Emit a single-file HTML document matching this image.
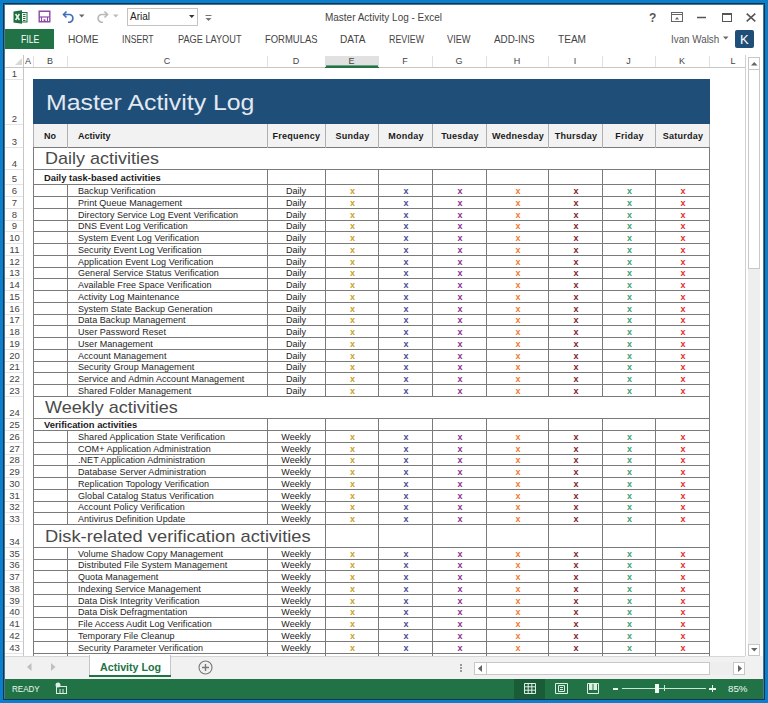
<!DOCTYPE html><html><head><meta charset='utf-8'><style>
*{margin:0;padding:0;box-sizing:border-box}
html,body{width:768px;height:703px;overflow:hidden;background:#fff}
body{position:relative;font-family:"Liberation Sans",sans-serif;color:#222}
div{position:absolute}
.t{white-space:nowrap;line-height:1}
.tab{font-size:10.5px;color:#444;top:34px}
.ch{font-size:9px;color:#444;top:57.3px;text-align:center}
.rh{font-size:9.5px;color:#444;left:5px;width:19px;text-align:center}
.act{font-size:9px;color:#222;left:78px}
.frq{font-size:9px;color:#222;left:267px;width:58px;text-align:center}
.hd{font-size:9px;font-weight:bold;color:#1a1a1a;text-align:center;top:132px;letter-spacing:0.25px}
.xm{font-size:9px;font-weight:bold;text-align:center}
.sec{font-size:16.5px;color:#333;left:45px;transform-origin:0 0;transform:scaleX(1.13)}
.sub{font-size:9.4px;font-weight:bold;color:#222;left:44px}
</style></head><body><div style="left:0;top:0;width:768px;height:703px;background:#fff"></div>
<svg style="position:absolute;left:13px;top:10px" width="15" height="14" viewBox="0 0 15 14"><rect x="8.5" y="2.5" width="5.5" height="9.5" fill="#f4faf6" stroke="#1e6e40" stroke-width="1"/><path d="M10 4.5h2.5M10 6.5h2.5M10 8.5h2.5M10 10.5h2.5" stroke="#1e6e40" stroke-width="1"/><path d="M0.5 1.5 L9 0.3 V13.7 L0.5 12.5Z" fill="#1e6e40"/><path d="M2.6 4 L6.4 10 M6.4 4 L2.6 10" stroke="#eaf5ee" stroke-width="1.5"/></svg>
<svg style="position:absolute;left:38px;top:10px" width="13" height="13" viewBox="0 0 13 13"><path d="M1.2 1.2H11.8V11.8H1.2Z" fill="#fff" stroke="#8e48a8" stroke-width="1.4"/><path d="M1.2 7H11.8" stroke="#8e48a8" stroke-width="1.2"/><path d="M3.5 7V11.8 M9.5 7V11.8" stroke="#8e48a8" stroke-width="1"/><rect x="5.6" y="9.3" width="1.8" height="2.5" fill="#8e48a8"/></svg>
<svg style="position:absolute;left:62px;top:10px" width="14" height="13" viewBox="0 0 14 13"><path d="M4.5 1.5 L1.5 4.5 L4.5 7.5" fill="none" stroke="#3f6fb6" stroke-width="1.6"/><path d="M1.8 4.5 H8 A4 4 0 0 1 8 12.2 H6" fill="none" stroke="#3f6fb6" stroke-width="1.6"/></svg>
<svg style="position:absolute;left:79px;top:14px" width="6" height="4"><path d="M0 0.5h5.5L2.75 3.5z" fill="#666"/></svg>
<svg style="position:absolute;left:95px;top:10px" width="14" height="13" viewBox="0 0 14 13"><path d="M9.5 1.5 L12.5 4.5 L9.5 7.5" fill="none" stroke="#b8b8b8" stroke-width="1.6"/><path d="M12.2 4.5 H6 A4 4 0 0 0 6 12.2 H8" fill="none" stroke="#b8b8b8" stroke-width="1.6"/></svg>
<svg style="position:absolute;left:113px;top:14px" width="6" height="4"><path d="M0 0.5h5.5L2.75 3.5z" fill="#bbb"/></svg>
<div style="left:127px;top:8px;width:71px;height:18px;border:1px solid #c3c3c3;background:#fff"></div>
<div class="t" style="left:130px;top:12px;font-size:10px;color:#222">Arial</div>
<svg style="position:absolute;left:189px;top:15px" width="6" height="4"><path d="M0 0h5.5L2.75 3z" fill="#333"/></svg>
<svg style="position:absolute;left:205px;top:14px" width="7" height="8"><path d="M0.5 1.5h6" stroke="#777" stroke-width="1"/><path d="M0.5 4h6L3.5 7z" fill="#777"/></svg>
<div class="t" style="left:649px;top:12px;font-size:12px;font-weight:bold;color:#555">?</div>
<svg style="position:absolute;left:671px;top:12px" width="12" height="10" viewBox="0 0 12 10"><rect x="0.5" y="0.5" width="11" height="9" fill="none" stroke="#666"/><path d="M0.5 2.5h11" stroke="#666"/><path d="M4 7.5 L6 5 L8 7.5Z" fill="#666"/></svg>
<svg style="position:absolute;left:697px;top:16px" width="9" height="3"><path d="M0 1.5H9" stroke="#555" stroke-width="1.5"/></svg>
<div style="left:722px;top:13px;width:10px;height:9px;border:1px solid #555;border-top-width:2px"></div>
<svg style="position:absolute;left:746px;top:13px" width="10" height="9" viewBox="0 0 10 9"><path d="M0.7 0.7 L9.3 8.3 M9.3 0.7 L0.7 8.3" stroke="#555" stroke-width="1.6"/></svg>
<div style="left:5px;top:29px;width:49px;height:20px;background:#217346;"></div>
<div class="t" style="left:324.5px;top:12px;font-size:11px;font-weight:400;transform-origin:0 0;transform:scaleX(0.9070);color:#444">Master Activity Log - Excel</div>
<div class="t" style="left:20.5px;top:33.8px;font-size:10.5px;font-weight:400;transform-origin:0 0;transform:scaleX(0.8248);color:#fff">FILE</div>
<div class="t" style="left:68.0px;top:33.8px;font-size:10.5px;font-weight:400;transform-origin:0 0;transform:scaleX(0.9683);color:#444">HOME</div>
<div class="t" style="left:122.0px;top:33.8px;font-size:10.5px;font-weight:400;transform-origin:0 0;transform:scaleX(0.8219);color:#444">INSERT</div>
<div class="t" style="left:177.5px;top:33.8px;font-size:10.5px;font-weight:400;transform-origin:0 0;transform:scaleX(0.8753);color:#444">PAGE LAYOUT</div>
<div class="t" style="left:264.5px;top:33.8px;font-size:10.5px;font-weight:400;transform-origin:0 0;transform:scaleX(0.8998);color:#444">FORMULAS</div>
<div class="t" style="left:340.0px;top:33.8px;font-size:10.5px;font-weight:400;transform-origin:0 0;transform:scaleX(0.9640);color:#444">DATA</div>
<div class="t" style="left:388.5px;top:33.8px;font-size:10.5px;font-weight:400;transform-origin:0 0;transform:scaleX(0.8450);color:#444">REVIEW</div>
<div class="t" style="left:447.0px;top:33.8px;font-size:10.5px;font-weight:400;transform-origin:0 0;transform:scaleX(0.8754);color:#444">VIEW</div>
<div class="t" style="left:494.0px;top:33.8px;font-size:10.5px;font-weight:400;transform-origin:0 0;transform:scaleX(0.9381);color:#444">ADD-INS</div>
<div class="t" style="left:557.5px;top:33.8px;font-size:10.5px;font-weight:400;transform-origin:0 0;transform:scaleX(0.9598);color:#444">TEAM</div>
<div class="t" style="left:670.5px;top:34px;font-size:10.5px;font-weight:400;transform-origin:0 0;transform:scaleX(0.9351);color:#555">Ivan Walsh</div>
<svg style="position:absolute;left:723px;top:36px" width="6" height="4"><path d="M0 0.5h5.5L2.75 3.5z" fill="#666"/></svg>
<div style="left:735px;top:30px;width:19px;height:18px;background:#1f4e79;border-radius:2px"></div>
<div class="t" style="left:740px;top:33px;font-size:13px;color:#fff">K</div>
<div style="left:5px;top:55px;width:740px;height:12px;background:#fff;"></div>
<div style="left:5px;top:67px;width:740px;height:1px;background:#c6c6c6"></div>
<div style="left:23px;top:55px;width:1px;height:601px;background:#c6c6c6"></div>
<div style="left:745px;top:55px;width:1px;height:601px;background:#d0d0d0"></div>
<svg style="position:absolute;left:15px;top:58px" width="7" height="7"><path d="M7 0V7H0Z" fill="#d8d8d8"/></svg>
<div class="t ch" style="left:23px;width:10px">A</div>
<div style="left:33px;top:56px;width:1px;height:11px;background:#e0e0e0"></div>
<div class="t ch" style="left:33px;width:34px">B</div>
<div style="left:67px;top:56px;width:1px;height:11px;background:#e0e0e0"></div>
<div class="t ch" style="left:67px;width:200px">C</div>
<div style="left:267px;top:56px;width:1px;height:11px;background:#e0e0e0"></div>
<div class="t ch" style="left:267px;width:58px">D</div>
<div style="left:325px;top:56px;width:54px;height:11px;background:#e1e1e1;"></div>
<div style="left:325px;top:65px;width:54px;height:1px;background:#6fa386;"></div>
<div style="left:325px;top:66px;width:54px;height:1.5px;background:#217346;"></div>
<div style="left:325px;top:56px;width:1px;height:11px;background:#e0e0e0"></div>
<div class="t ch" style="left:325px;width:53px">E</div>
<div style="left:378px;top:56px;width:1px;height:11px;background:#e0e0e0"></div>
<div class="t ch" style="left:378px;width:54px">F</div>
<div style="left:432px;top:56px;width:1px;height:11px;background:#e0e0e0"></div>
<div class="t ch" style="left:432px;width:54px">G</div>
<div style="left:486px;top:56px;width:1px;height:11px;background:#e0e0e0"></div>
<div class="t ch" style="left:486px;width:62px">H</div>
<div style="left:548px;top:56px;width:1px;height:11px;background:#e0e0e0"></div>
<div class="t ch" style="left:548px;width:54px">I</div>
<div style="left:602px;top:56px;width:1px;height:11px;background:#e0e0e0"></div>
<div class="t ch" style="left:602px;width:53px">J</div>
<div style="left:655px;top:56px;width:1px;height:11px;background:#e0e0e0"></div>
<div class="t ch" style="left:655px;width:54px">K</div>
<div style="left:709px;top:56px;width:1px;height:11px;background:#e0e0e0"></div>
<div class="t ch" style="left:709px;width:48px">L</div>
<div style="left:5px;top:79px;width:18px;height:1px;background:#e3e3e3"></div>
<div class="t rh" style="top:69px">1</div>
<div style="left:5px;top:124px;width:18px;height:1px;background:#e3e3e3"></div>
<div class="t rh" style="top:114px">2</div>
<div style="left:5px;top:147px;width:18px;height:1px;background:#e3e3e3"></div>
<div class="t rh" style="top:137px">3</div>
<div style="left:5px;top:169px;width:18px;height:1px;background:#e3e3e3"></div>
<div class="t rh" style="top:159px">4</div>
<div style="left:5px;top:184px;width:18px;height:1px;background:#e3e3e3"></div>
<div class="t rh" style="top:174px">5</div>
<div style="left:5px;top:196px;width:18px;height:1px;background:#e3e3e3"></div>
<div class="t rh" style="top:186px">6</div>
<div style="left:5px;top:208px;width:18px;height:1px;background:#e3e3e3"></div>
<div class="t rh" style="top:198px">7</div>
<div style="left:5px;top:220px;width:18px;height:1px;background:#e3e3e3"></div>
<div class="t rh" style="top:210px">8</div>
<div style="left:5px;top:231px;width:18px;height:1px;background:#e3e3e3"></div>
<div class="t rh" style="top:221px">9</div>
<div style="left:5px;top:243px;width:18px;height:1px;background:#e3e3e3"></div>
<div class="t rh" style="top:233px">10</div>
<div style="left:5px;top:255px;width:18px;height:1px;background:#e3e3e3"></div>
<div class="t rh" style="top:245px">11</div>
<div style="left:5px;top:267px;width:18px;height:1px;background:#e3e3e3"></div>
<div class="t rh" style="top:257px">12</div>
<div style="left:5px;top:278px;width:18px;height:1px;background:#e3e3e3"></div>
<div class="t rh" style="top:268px">13</div>
<div style="left:5px;top:290px;width:18px;height:1px;background:#e3e3e3"></div>
<div class="t rh" style="top:280px">14</div>
<div style="left:5px;top:302px;width:18px;height:1px;background:#e3e3e3"></div>
<div class="t rh" style="top:292px">15</div>
<div style="left:5px;top:314px;width:18px;height:1px;background:#e3e3e3"></div>
<div class="t rh" style="top:304px">16</div>
<div style="left:5px;top:325px;width:18px;height:1px;background:#e3e3e3"></div>
<div class="t rh" style="top:315px">17</div>
<div style="left:5px;top:337px;width:18px;height:1px;background:#e3e3e3"></div>
<div class="t rh" style="top:327px">18</div>
<div style="left:5px;top:349px;width:18px;height:1px;background:#e3e3e3"></div>
<div class="t rh" style="top:339px">19</div>
<div style="left:5px;top:361px;width:18px;height:1px;background:#e3e3e3"></div>
<div class="t rh" style="top:351px">20</div>
<div style="left:5px;top:372px;width:18px;height:1px;background:#e3e3e3"></div>
<div class="t rh" style="top:362px">21</div>
<div style="left:5px;top:384px;width:18px;height:1px;background:#e3e3e3"></div>
<div class="t rh" style="top:374px">22</div>
<div style="left:5px;top:396px;width:18px;height:1px;background:#e3e3e3"></div>
<div class="t rh" style="top:386px">23</div>
<div style="left:5px;top:418px;width:18px;height:1px;background:#e3e3e3"></div>
<div class="t rh" style="top:408px">24</div>
<div style="left:5px;top:430px;width:18px;height:1px;background:#e3e3e3"></div>
<div class="t rh" style="top:420px">25</div>
<div style="left:5px;top:442px;width:18px;height:1px;background:#e3e3e3"></div>
<div class="t rh" style="top:432px">26</div>
<div style="left:5px;top:454px;width:18px;height:1px;background:#e3e3e3"></div>
<div class="t rh" style="top:444px">27</div>
<div style="left:5px;top:465px;width:18px;height:1px;background:#e3e3e3"></div>
<div class="t rh" style="top:455px">28</div>
<div style="left:5px;top:477px;width:18px;height:1px;background:#e3e3e3"></div>
<div class="t rh" style="top:467px">29</div>
<div style="left:5px;top:489px;width:18px;height:1px;background:#e3e3e3"></div>
<div class="t rh" style="top:479px">30</div>
<div style="left:5px;top:501px;width:18px;height:1px;background:#e3e3e3"></div>
<div class="t rh" style="top:491px">31</div>
<div style="left:5px;top:512px;width:18px;height:1px;background:#e3e3e3"></div>
<div class="t rh" style="top:502px">32</div>
<div style="left:5px;top:524px;width:18px;height:1px;background:#e3e3e3"></div>
<div class="t rh" style="top:514px">33</div>
<div style="left:5px;top:547px;width:18px;height:1px;background:#e3e3e3"></div>
<div class="t rh" style="top:537px">34</div>
<div style="left:5px;top:559px;width:18px;height:1px;background:#e3e3e3"></div>
<div class="t rh" style="top:549px">35</div>
<div style="left:5px;top:570px;width:18px;height:1px;background:#e3e3e3"></div>
<div class="t rh" style="top:560px">36</div>
<div style="left:5px;top:582px;width:18px;height:1px;background:#e3e3e3"></div>
<div class="t rh" style="top:572px">37</div>
<div style="left:5px;top:594px;width:18px;height:1px;background:#e3e3e3"></div>
<div class="t rh" style="top:584px">38</div>
<div style="left:5px;top:606px;width:18px;height:1px;background:#e3e3e3"></div>
<div class="t rh" style="top:596px">39</div>
<div style="left:5px;top:617px;width:18px;height:1px;background:#e3e3e3"></div>
<div class="t rh" style="top:607px">40</div>
<div style="left:5px;top:629px;width:18px;height:1px;background:#e3e3e3"></div>
<div class="t rh" style="top:619px">41</div>
<div style="left:5px;top:641px;width:18px;height:1px;background:#e3e3e3"></div>
<div class="t rh" style="top:631px">42</div>
<div style="left:5px;top:653px;width:18px;height:1px;background:#e3e3e3"></div>
<div class="t rh" style="top:643px">43</div>

<div style="left:33px;top:79px;width:677px;height:45px;background:#1f4e79;"></div>
<div class="t" style="left:46px;top:93px;font-size:21.5px;color:#e2e9f0;transform-origin:0 0;transform:scaleX(1.155)">Master Activity Log</div>
<div style="left:33px;top:124px;width:677px;height:23px;background:#f2f2f2;"></div>
<div class="t" style="left:44px;top:132px;font-size:9px;font-weight:bold;color:#1a1a1a">No</div>
<div class="t" style="left:78px;top:132px;font-size:9px;font-weight:bold;color:#1a1a1a">Activity</div>
<div class="t hd" style="left:267.5px;width:58px">Frequency</div>
<div class="t hd" style="left:326px;width:53px">Sunday</div>
<div class="t hd" style="left:379px;width:54px">Monday</div>
<div class="t hd" style="left:433px;width:54px">Tuesday</div>
<div class="t hd" style="left:487px;width:62px">Wednesday</div>
<div class="t hd" style="left:549px;width:54px">Thursday</div>
<div class="t hd" style="left:603px;width:53px">Friday</div>
<div class="t hd" style="left:656px;width:54px">Saturday</div>
<div style="left:33px;top:147px;width:677px;height:1px;background:#7a7a7a"></div>
<div style="left:33px;top:124px;width:1px;height:24px;background:#b0b0b0"></div>
<div style="left:67px;top:124px;width:1px;height:24px;background:#b0b0b0"></div>
<div style="left:267px;top:124px;width:1px;height:24px;background:#b0b0b0"></div>
<div style="left:325px;top:124px;width:1px;height:24px;background:#b0b0b0"></div>
<div style="left:378px;top:124px;width:1px;height:24px;background:#b0b0b0"></div>
<div style="left:432px;top:124px;width:1px;height:24px;background:#b0b0b0"></div>
<div style="left:486px;top:124px;width:1px;height:24px;background:#b0b0b0"></div>
<div style="left:548px;top:124px;width:1px;height:24px;background:#b0b0b0"></div>
<div style="left:602px;top:124px;width:1px;height:24px;background:#b0b0b0"></div>
<div style="left:655px;top:124px;width:1px;height:24px;background:#b0b0b0"></div>
<div style="left:709px;top:124px;width:1px;height:24px;background:#b0b0b0"></div>
<div class="t" style="left:44.5px;top:150.0px;font-size:17px;color:#4a4a4a;transform-origin:0 0;transform:scaleX(1.0585)">Daily activities</div>
<div style="left:33px;top:169px;width:677px;height:1px;background:#7a7a7a"></div>
<div style="left:33px;top:147px;width:1px;height:23px;background:#7a7a7a"></div>
<div style="left:709px;top:147px;width:1px;height:23px;background:#7a7a7a"></div>
<div class="t" style="left:44px;top:172.9px;font-size:9.4px;font-weight:bold;color:#1a1a1a">Daily task-based activities</div>
<div style="left:33px;top:184px;width:677px;height:1px;background:#7a7a7a"></div>
<div style="left:33px;top:169px;width:1px;height:16px;background:#7a7a7a"></div>
<div style="left:267px;top:169px;width:1px;height:16px;background:#7a7a7a"></div>
<div style="left:325px;top:169px;width:1px;height:16px;background:#7a7a7a"></div>
<div style="left:378px;top:169px;width:1px;height:16px;background:#7a7a7a"></div>
<div style="left:432px;top:169px;width:1px;height:16px;background:#7a7a7a"></div>
<div style="left:486px;top:169px;width:1px;height:16px;background:#7a7a7a"></div>
<div style="left:548px;top:169px;width:1px;height:16px;background:#7a7a7a"></div>
<div style="left:602px;top:169px;width:1px;height:16px;background:#7a7a7a"></div>
<div style="left:655px;top:169px;width:1px;height:16px;background:#7a7a7a"></div>
<div style="left:709px;top:169px;width:1px;height:16px;background:#7a7a7a"></div>
<div style="left:33px;top:196px;width:677px;height:1px;background:#7a7a7a"></div>
<div style="left:33px;top:184px;width:1px;height:13px;background:#7a7a7a"></div>
<div style="left:67px;top:184px;width:1px;height:13px;background:#7a7a7a"></div>
<div style="left:267px;top:184px;width:1px;height:13px;background:#7a7a7a"></div>
<div style="left:325px;top:184px;width:1px;height:13px;background:#7a7a7a"></div>
<div style="left:378px;top:184px;width:1px;height:13px;background:#7a7a7a"></div>
<div style="left:432px;top:184px;width:1px;height:13px;background:#7a7a7a"></div>
<div style="left:486px;top:184px;width:1px;height:13px;background:#7a7a7a"></div>
<div style="left:548px;top:184px;width:1px;height:13px;background:#7a7a7a"></div>
<div style="left:602px;top:184px;width:1px;height:13px;background:#7a7a7a"></div>
<div style="left:655px;top:184px;width:1px;height:13px;background:#7a7a7a"></div>
<div style="left:709px;top:184px;width:1px;height:13px;background:#7a7a7a"></div>
<div class="t" style="left:78px;top:186.5px;font-size:9px;color:#1e1e1e;letter-spacing:0.05px">Backup Verification</div>
<div class="t frq" style="top:186.5px">Daily</div>
<div class="t xm" style="left:326px;width:53px;top:186.5px;color:#c99f2c">x</div>
<div class="t xm" style="left:379px;width:54px;top:186.5px;color:#4a4c94">x</div>
<div class="t xm" style="left:433px;width:54px;top:186.5px;color:#8e2f93">x</div>
<div class="t xm" style="left:487px;width:62px;top:186.5px;color:#f07a30">x</div>
<div class="t xm" style="left:549px;width:54px;top:186.5px;color:#82202e">x</div>
<div class="t xm" style="left:603px;width:53px;top:186.5px;color:#42a070">x</div>
<div class="t xm" style="left:656px;width:54px;top:186.5px;color:#e22b2e">x</div>
<div style="left:33px;top:208px;width:677px;height:1px;background:#7a7a7a"></div>
<div style="left:33px;top:196px;width:1px;height:13px;background:#7a7a7a"></div>
<div style="left:67px;top:196px;width:1px;height:13px;background:#7a7a7a"></div>
<div style="left:267px;top:196px;width:1px;height:13px;background:#7a7a7a"></div>
<div style="left:325px;top:196px;width:1px;height:13px;background:#7a7a7a"></div>
<div style="left:378px;top:196px;width:1px;height:13px;background:#7a7a7a"></div>
<div style="left:432px;top:196px;width:1px;height:13px;background:#7a7a7a"></div>
<div style="left:486px;top:196px;width:1px;height:13px;background:#7a7a7a"></div>
<div style="left:548px;top:196px;width:1px;height:13px;background:#7a7a7a"></div>
<div style="left:602px;top:196px;width:1px;height:13px;background:#7a7a7a"></div>
<div style="left:655px;top:196px;width:1px;height:13px;background:#7a7a7a"></div>
<div style="left:709px;top:196px;width:1px;height:13px;background:#7a7a7a"></div>
<div class="t" style="left:78px;top:198.5px;font-size:9px;color:#1e1e1e;letter-spacing:0.05px">Print Queue Management</div>
<div class="t frq" style="top:198.5px">Daily</div>
<div class="t xm" style="left:326px;width:53px;top:198.5px;color:#c99f2c">x</div>
<div class="t xm" style="left:379px;width:54px;top:198.5px;color:#4a4c94">x</div>
<div class="t xm" style="left:433px;width:54px;top:198.5px;color:#8e2f93">x</div>
<div class="t xm" style="left:487px;width:62px;top:198.5px;color:#f07a30">x</div>
<div class="t xm" style="left:549px;width:54px;top:198.5px;color:#82202e">x</div>
<div class="t xm" style="left:603px;width:53px;top:198.5px;color:#42a070">x</div>
<div class="t xm" style="left:656px;width:54px;top:198.5px;color:#e22b2e">x</div>
<div style="left:33px;top:220px;width:677px;height:1px;background:#7a7a7a"></div>
<div style="left:33px;top:208px;width:1px;height:13px;background:#7a7a7a"></div>
<div style="left:67px;top:208px;width:1px;height:13px;background:#7a7a7a"></div>
<div style="left:267px;top:208px;width:1px;height:13px;background:#7a7a7a"></div>
<div style="left:325px;top:208px;width:1px;height:13px;background:#7a7a7a"></div>
<div style="left:378px;top:208px;width:1px;height:13px;background:#7a7a7a"></div>
<div style="left:432px;top:208px;width:1px;height:13px;background:#7a7a7a"></div>
<div style="left:486px;top:208px;width:1px;height:13px;background:#7a7a7a"></div>
<div style="left:548px;top:208px;width:1px;height:13px;background:#7a7a7a"></div>
<div style="left:602px;top:208px;width:1px;height:13px;background:#7a7a7a"></div>
<div style="left:655px;top:208px;width:1px;height:13px;background:#7a7a7a"></div>
<div style="left:709px;top:208px;width:1px;height:13px;background:#7a7a7a"></div>
<div class="t" style="left:78px;top:210.5px;font-size:9px;color:#1e1e1e;letter-spacing:0.05px">Directory Service Log Event Verification</div>
<div class="t frq" style="top:210.5px">Daily</div>
<div class="t xm" style="left:326px;width:53px;top:210.5px;color:#c99f2c">x</div>
<div class="t xm" style="left:379px;width:54px;top:210.5px;color:#4a4c94">x</div>
<div class="t xm" style="left:433px;width:54px;top:210.5px;color:#8e2f93">x</div>
<div class="t xm" style="left:487px;width:62px;top:210.5px;color:#f07a30">x</div>
<div class="t xm" style="left:549px;width:54px;top:210.5px;color:#82202e">x</div>
<div class="t xm" style="left:603px;width:53px;top:210.5px;color:#42a070">x</div>
<div class="t xm" style="left:656px;width:54px;top:210.5px;color:#e22b2e">x</div>
<div style="left:33px;top:231px;width:677px;height:1px;background:#7a7a7a"></div>
<div style="left:33px;top:220px;width:1px;height:12px;background:#7a7a7a"></div>
<div style="left:67px;top:220px;width:1px;height:12px;background:#7a7a7a"></div>
<div style="left:267px;top:220px;width:1px;height:12px;background:#7a7a7a"></div>
<div style="left:325px;top:220px;width:1px;height:12px;background:#7a7a7a"></div>
<div style="left:378px;top:220px;width:1px;height:12px;background:#7a7a7a"></div>
<div style="left:432px;top:220px;width:1px;height:12px;background:#7a7a7a"></div>
<div style="left:486px;top:220px;width:1px;height:12px;background:#7a7a7a"></div>
<div style="left:548px;top:220px;width:1px;height:12px;background:#7a7a7a"></div>
<div style="left:602px;top:220px;width:1px;height:12px;background:#7a7a7a"></div>
<div style="left:655px;top:220px;width:1px;height:12px;background:#7a7a7a"></div>
<div style="left:709px;top:220px;width:1px;height:12px;background:#7a7a7a"></div>
<div class="t" style="left:78px;top:221.5px;font-size:9px;color:#1e1e1e;letter-spacing:0.05px">DNS Event Log Verification</div>
<div class="t frq" style="top:221.5px">Daily</div>
<div class="t xm" style="left:326px;width:53px;top:221.5px;color:#c99f2c">x</div>
<div class="t xm" style="left:379px;width:54px;top:221.5px;color:#4a4c94">x</div>
<div class="t xm" style="left:433px;width:54px;top:221.5px;color:#8e2f93">x</div>
<div class="t xm" style="left:487px;width:62px;top:221.5px;color:#f07a30">x</div>
<div class="t xm" style="left:549px;width:54px;top:221.5px;color:#82202e">x</div>
<div class="t xm" style="left:603px;width:53px;top:221.5px;color:#42a070">x</div>
<div class="t xm" style="left:656px;width:54px;top:221.5px;color:#e22b2e">x</div>
<div style="left:33px;top:243px;width:677px;height:1px;background:#7a7a7a"></div>
<div style="left:33px;top:231px;width:1px;height:13px;background:#7a7a7a"></div>
<div style="left:67px;top:231px;width:1px;height:13px;background:#7a7a7a"></div>
<div style="left:267px;top:231px;width:1px;height:13px;background:#7a7a7a"></div>
<div style="left:325px;top:231px;width:1px;height:13px;background:#7a7a7a"></div>
<div style="left:378px;top:231px;width:1px;height:13px;background:#7a7a7a"></div>
<div style="left:432px;top:231px;width:1px;height:13px;background:#7a7a7a"></div>
<div style="left:486px;top:231px;width:1px;height:13px;background:#7a7a7a"></div>
<div style="left:548px;top:231px;width:1px;height:13px;background:#7a7a7a"></div>
<div style="left:602px;top:231px;width:1px;height:13px;background:#7a7a7a"></div>
<div style="left:655px;top:231px;width:1px;height:13px;background:#7a7a7a"></div>
<div style="left:709px;top:231px;width:1px;height:13px;background:#7a7a7a"></div>
<div class="t" style="left:78px;top:233.5px;font-size:9px;color:#1e1e1e;letter-spacing:0.05px">System Event Log Verification</div>
<div class="t frq" style="top:233.5px">Daily</div>
<div class="t xm" style="left:326px;width:53px;top:233.5px;color:#c99f2c">x</div>
<div class="t xm" style="left:379px;width:54px;top:233.5px;color:#4a4c94">x</div>
<div class="t xm" style="left:433px;width:54px;top:233.5px;color:#8e2f93">x</div>
<div class="t xm" style="left:487px;width:62px;top:233.5px;color:#f07a30">x</div>
<div class="t xm" style="left:549px;width:54px;top:233.5px;color:#82202e">x</div>
<div class="t xm" style="left:603px;width:53px;top:233.5px;color:#42a070">x</div>
<div class="t xm" style="left:656px;width:54px;top:233.5px;color:#e22b2e">x</div>
<div style="left:33px;top:255px;width:677px;height:1px;background:#7a7a7a"></div>
<div style="left:33px;top:243px;width:1px;height:13px;background:#7a7a7a"></div>
<div style="left:67px;top:243px;width:1px;height:13px;background:#7a7a7a"></div>
<div style="left:267px;top:243px;width:1px;height:13px;background:#7a7a7a"></div>
<div style="left:325px;top:243px;width:1px;height:13px;background:#7a7a7a"></div>
<div style="left:378px;top:243px;width:1px;height:13px;background:#7a7a7a"></div>
<div style="left:432px;top:243px;width:1px;height:13px;background:#7a7a7a"></div>
<div style="left:486px;top:243px;width:1px;height:13px;background:#7a7a7a"></div>
<div style="left:548px;top:243px;width:1px;height:13px;background:#7a7a7a"></div>
<div style="left:602px;top:243px;width:1px;height:13px;background:#7a7a7a"></div>
<div style="left:655px;top:243px;width:1px;height:13px;background:#7a7a7a"></div>
<div style="left:709px;top:243px;width:1px;height:13px;background:#7a7a7a"></div>
<div class="t" style="left:78px;top:245.5px;font-size:9px;color:#1e1e1e;letter-spacing:0.05px">Security Event Log Verification</div>
<div class="t frq" style="top:245.5px">Daily</div>
<div class="t xm" style="left:326px;width:53px;top:245.5px;color:#c99f2c">x</div>
<div class="t xm" style="left:379px;width:54px;top:245.5px;color:#4a4c94">x</div>
<div class="t xm" style="left:433px;width:54px;top:245.5px;color:#8e2f93">x</div>
<div class="t xm" style="left:487px;width:62px;top:245.5px;color:#f07a30">x</div>
<div class="t xm" style="left:549px;width:54px;top:245.5px;color:#82202e">x</div>
<div class="t xm" style="left:603px;width:53px;top:245.5px;color:#42a070">x</div>
<div class="t xm" style="left:656px;width:54px;top:245.5px;color:#e22b2e">x</div>
<div style="left:33px;top:267px;width:677px;height:1px;background:#7a7a7a"></div>
<div style="left:33px;top:255px;width:1px;height:13px;background:#7a7a7a"></div>
<div style="left:67px;top:255px;width:1px;height:13px;background:#7a7a7a"></div>
<div style="left:267px;top:255px;width:1px;height:13px;background:#7a7a7a"></div>
<div style="left:325px;top:255px;width:1px;height:13px;background:#7a7a7a"></div>
<div style="left:378px;top:255px;width:1px;height:13px;background:#7a7a7a"></div>
<div style="left:432px;top:255px;width:1px;height:13px;background:#7a7a7a"></div>
<div style="left:486px;top:255px;width:1px;height:13px;background:#7a7a7a"></div>
<div style="left:548px;top:255px;width:1px;height:13px;background:#7a7a7a"></div>
<div style="left:602px;top:255px;width:1px;height:13px;background:#7a7a7a"></div>
<div style="left:655px;top:255px;width:1px;height:13px;background:#7a7a7a"></div>
<div style="left:709px;top:255px;width:1px;height:13px;background:#7a7a7a"></div>
<div class="t" style="left:78px;top:257.5px;font-size:9px;color:#1e1e1e;letter-spacing:0.05px">Application Event Log Verification</div>
<div class="t frq" style="top:257.5px">Daily</div>
<div class="t xm" style="left:326px;width:53px;top:257.5px;color:#c99f2c">x</div>
<div class="t xm" style="left:379px;width:54px;top:257.5px;color:#4a4c94">x</div>
<div class="t xm" style="left:433px;width:54px;top:257.5px;color:#8e2f93">x</div>
<div class="t xm" style="left:487px;width:62px;top:257.5px;color:#f07a30">x</div>
<div class="t xm" style="left:549px;width:54px;top:257.5px;color:#82202e">x</div>
<div class="t xm" style="left:603px;width:53px;top:257.5px;color:#42a070">x</div>
<div class="t xm" style="left:656px;width:54px;top:257.5px;color:#e22b2e">x</div>
<div style="left:33px;top:278px;width:677px;height:1px;background:#7a7a7a"></div>
<div style="left:33px;top:267px;width:1px;height:12px;background:#7a7a7a"></div>
<div style="left:67px;top:267px;width:1px;height:12px;background:#7a7a7a"></div>
<div style="left:267px;top:267px;width:1px;height:12px;background:#7a7a7a"></div>
<div style="left:325px;top:267px;width:1px;height:12px;background:#7a7a7a"></div>
<div style="left:378px;top:267px;width:1px;height:12px;background:#7a7a7a"></div>
<div style="left:432px;top:267px;width:1px;height:12px;background:#7a7a7a"></div>
<div style="left:486px;top:267px;width:1px;height:12px;background:#7a7a7a"></div>
<div style="left:548px;top:267px;width:1px;height:12px;background:#7a7a7a"></div>
<div style="left:602px;top:267px;width:1px;height:12px;background:#7a7a7a"></div>
<div style="left:655px;top:267px;width:1px;height:12px;background:#7a7a7a"></div>
<div style="left:709px;top:267px;width:1px;height:12px;background:#7a7a7a"></div>
<div class="t" style="left:78px;top:268.5px;font-size:9px;color:#1e1e1e;letter-spacing:0.05px">General Service Status Verification</div>
<div class="t frq" style="top:268.5px">Daily</div>
<div class="t xm" style="left:326px;width:53px;top:268.5px;color:#c99f2c">x</div>
<div class="t xm" style="left:379px;width:54px;top:268.5px;color:#4a4c94">x</div>
<div class="t xm" style="left:433px;width:54px;top:268.5px;color:#8e2f93">x</div>
<div class="t xm" style="left:487px;width:62px;top:268.5px;color:#f07a30">x</div>
<div class="t xm" style="left:549px;width:54px;top:268.5px;color:#82202e">x</div>
<div class="t xm" style="left:603px;width:53px;top:268.5px;color:#42a070">x</div>
<div class="t xm" style="left:656px;width:54px;top:268.5px;color:#e22b2e">x</div>
<div style="left:33px;top:290px;width:677px;height:1px;background:#7a7a7a"></div>
<div style="left:33px;top:278px;width:1px;height:13px;background:#7a7a7a"></div>
<div style="left:67px;top:278px;width:1px;height:13px;background:#7a7a7a"></div>
<div style="left:267px;top:278px;width:1px;height:13px;background:#7a7a7a"></div>
<div style="left:325px;top:278px;width:1px;height:13px;background:#7a7a7a"></div>
<div style="left:378px;top:278px;width:1px;height:13px;background:#7a7a7a"></div>
<div style="left:432px;top:278px;width:1px;height:13px;background:#7a7a7a"></div>
<div style="left:486px;top:278px;width:1px;height:13px;background:#7a7a7a"></div>
<div style="left:548px;top:278px;width:1px;height:13px;background:#7a7a7a"></div>
<div style="left:602px;top:278px;width:1px;height:13px;background:#7a7a7a"></div>
<div style="left:655px;top:278px;width:1px;height:13px;background:#7a7a7a"></div>
<div style="left:709px;top:278px;width:1px;height:13px;background:#7a7a7a"></div>
<div class="t" style="left:78px;top:280.5px;font-size:9px;color:#1e1e1e;letter-spacing:0.05px">Available Free Space Verification</div>
<div class="t frq" style="top:280.5px">Daily</div>
<div class="t xm" style="left:326px;width:53px;top:280.5px;color:#c99f2c">x</div>
<div class="t xm" style="left:379px;width:54px;top:280.5px;color:#4a4c94">x</div>
<div class="t xm" style="left:433px;width:54px;top:280.5px;color:#8e2f93">x</div>
<div class="t xm" style="left:487px;width:62px;top:280.5px;color:#f07a30">x</div>
<div class="t xm" style="left:549px;width:54px;top:280.5px;color:#82202e">x</div>
<div class="t xm" style="left:603px;width:53px;top:280.5px;color:#42a070">x</div>
<div class="t xm" style="left:656px;width:54px;top:280.5px;color:#e22b2e">x</div>
<div style="left:33px;top:302px;width:677px;height:1px;background:#7a7a7a"></div>
<div style="left:33px;top:290px;width:1px;height:13px;background:#7a7a7a"></div>
<div style="left:67px;top:290px;width:1px;height:13px;background:#7a7a7a"></div>
<div style="left:267px;top:290px;width:1px;height:13px;background:#7a7a7a"></div>
<div style="left:325px;top:290px;width:1px;height:13px;background:#7a7a7a"></div>
<div style="left:378px;top:290px;width:1px;height:13px;background:#7a7a7a"></div>
<div style="left:432px;top:290px;width:1px;height:13px;background:#7a7a7a"></div>
<div style="left:486px;top:290px;width:1px;height:13px;background:#7a7a7a"></div>
<div style="left:548px;top:290px;width:1px;height:13px;background:#7a7a7a"></div>
<div style="left:602px;top:290px;width:1px;height:13px;background:#7a7a7a"></div>
<div style="left:655px;top:290px;width:1px;height:13px;background:#7a7a7a"></div>
<div style="left:709px;top:290px;width:1px;height:13px;background:#7a7a7a"></div>
<div class="t" style="left:78px;top:292.5px;font-size:9px;color:#1e1e1e;letter-spacing:0.05px">Activity Log Maintenance</div>
<div class="t frq" style="top:292.5px">Daily</div>
<div class="t xm" style="left:326px;width:53px;top:292.5px;color:#c99f2c">x</div>
<div class="t xm" style="left:379px;width:54px;top:292.5px;color:#4a4c94">x</div>
<div class="t xm" style="left:433px;width:54px;top:292.5px;color:#8e2f93">x</div>
<div class="t xm" style="left:487px;width:62px;top:292.5px;color:#f07a30">x</div>
<div class="t xm" style="left:549px;width:54px;top:292.5px;color:#82202e">x</div>
<div class="t xm" style="left:603px;width:53px;top:292.5px;color:#42a070">x</div>
<div class="t xm" style="left:656px;width:54px;top:292.5px;color:#e22b2e">x</div>
<div style="left:33px;top:314px;width:677px;height:1px;background:#7a7a7a"></div>
<div style="left:33px;top:302px;width:1px;height:13px;background:#7a7a7a"></div>
<div style="left:67px;top:302px;width:1px;height:13px;background:#7a7a7a"></div>
<div style="left:267px;top:302px;width:1px;height:13px;background:#7a7a7a"></div>
<div style="left:325px;top:302px;width:1px;height:13px;background:#7a7a7a"></div>
<div style="left:378px;top:302px;width:1px;height:13px;background:#7a7a7a"></div>
<div style="left:432px;top:302px;width:1px;height:13px;background:#7a7a7a"></div>
<div style="left:486px;top:302px;width:1px;height:13px;background:#7a7a7a"></div>
<div style="left:548px;top:302px;width:1px;height:13px;background:#7a7a7a"></div>
<div style="left:602px;top:302px;width:1px;height:13px;background:#7a7a7a"></div>
<div style="left:655px;top:302px;width:1px;height:13px;background:#7a7a7a"></div>
<div style="left:709px;top:302px;width:1px;height:13px;background:#7a7a7a"></div>
<div class="t" style="left:78px;top:304.5px;font-size:9px;color:#1e1e1e;letter-spacing:0.05px">System State Backup Generation</div>
<div class="t frq" style="top:304.5px">Daily</div>
<div class="t xm" style="left:326px;width:53px;top:304.5px;color:#c99f2c">x</div>
<div class="t xm" style="left:379px;width:54px;top:304.5px;color:#4a4c94">x</div>
<div class="t xm" style="left:433px;width:54px;top:304.5px;color:#8e2f93">x</div>
<div class="t xm" style="left:487px;width:62px;top:304.5px;color:#f07a30">x</div>
<div class="t xm" style="left:549px;width:54px;top:304.5px;color:#82202e">x</div>
<div class="t xm" style="left:603px;width:53px;top:304.5px;color:#42a070">x</div>
<div class="t xm" style="left:656px;width:54px;top:304.5px;color:#e22b2e">x</div>
<div style="left:33px;top:325px;width:677px;height:1px;background:#7a7a7a"></div>
<div style="left:33px;top:314px;width:1px;height:12px;background:#7a7a7a"></div>
<div style="left:67px;top:314px;width:1px;height:12px;background:#7a7a7a"></div>
<div style="left:267px;top:314px;width:1px;height:12px;background:#7a7a7a"></div>
<div style="left:325px;top:314px;width:1px;height:12px;background:#7a7a7a"></div>
<div style="left:378px;top:314px;width:1px;height:12px;background:#7a7a7a"></div>
<div style="left:432px;top:314px;width:1px;height:12px;background:#7a7a7a"></div>
<div style="left:486px;top:314px;width:1px;height:12px;background:#7a7a7a"></div>
<div style="left:548px;top:314px;width:1px;height:12px;background:#7a7a7a"></div>
<div style="left:602px;top:314px;width:1px;height:12px;background:#7a7a7a"></div>
<div style="left:655px;top:314px;width:1px;height:12px;background:#7a7a7a"></div>
<div style="left:709px;top:314px;width:1px;height:12px;background:#7a7a7a"></div>
<div class="t" style="left:78px;top:315.5px;font-size:9px;color:#1e1e1e;letter-spacing:0.05px">Data Backup Management</div>
<div class="t frq" style="top:315.5px">Daily</div>
<div class="t xm" style="left:326px;width:53px;top:315.5px;color:#c99f2c">x</div>
<div class="t xm" style="left:379px;width:54px;top:315.5px;color:#4a4c94">x</div>
<div class="t xm" style="left:433px;width:54px;top:315.5px;color:#8e2f93">x</div>
<div class="t xm" style="left:487px;width:62px;top:315.5px;color:#f07a30">x</div>
<div class="t xm" style="left:549px;width:54px;top:315.5px;color:#82202e">x</div>
<div class="t xm" style="left:603px;width:53px;top:315.5px;color:#42a070">x</div>
<div class="t xm" style="left:656px;width:54px;top:315.5px;color:#e22b2e">x</div>
<div style="left:33px;top:337px;width:677px;height:1px;background:#7a7a7a"></div>
<div style="left:33px;top:325px;width:1px;height:13px;background:#7a7a7a"></div>
<div style="left:67px;top:325px;width:1px;height:13px;background:#7a7a7a"></div>
<div style="left:267px;top:325px;width:1px;height:13px;background:#7a7a7a"></div>
<div style="left:325px;top:325px;width:1px;height:13px;background:#7a7a7a"></div>
<div style="left:378px;top:325px;width:1px;height:13px;background:#7a7a7a"></div>
<div style="left:432px;top:325px;width:1px;height:13px;background:#7a7a7a"></div>
<div style="left:486px;top:325px;width:1px;height:13px;background:#7a7a7a"></div>
<div style="left:548px;top:325px;width:1px;height:13px;background:#7a7a7a"></div>
<div style="left:602px;top:325px;width:1px;height:13px;background:#7a7a7a"></div>
<div style="left:655px;top:325px;width:1px;height:13px;background:#7a7a7a"></div>
<div style="left:709px;top:325px;width:1px;height:13px;background:#7a7a7a"></div>
<div class="t" style="left:78px;top:327.5px;font-size:9px;color:#1e1e1e;letter-spacing:0.05px">User Password Reset</div>
<div class="t frq" style="top:327.5px">Daily</div>
<div class="t xm" style="left:326px;width:53px;top:327.5px;color:#c99f2c">x</div>
<div class="t xm" style="left:379px;width:54px;top:327.5px;color:#4a4c94">x</div>
<div class="t xm" style="left:433px;width:54px;top:327.5px;color:#8e2f93">x</div>
<div class="t xm" style="left:487px;width:62px;top:327.5px;color:#f07a30">x</div>
<div class="t xm" style="left:549px;width:54px;top:327.5px;color:#82202e">x</div>
<div class="t xm" style="left:603px;width:53px;top:327.5px;color:#42a070">x</div>
<div class="t xm" style="left:656px;width:54px;top:327.5px;color:#e22b2e">x</div>
<div style="left:33px;top:349px;width:677px;height:1px;background:#7a7a7a"></div>
<div style="left:33px;top:337px;width:1px;height:13px;background:#7a7a7a"></div>
<div style="left:67px;top:337px;width:1px;height:13px;background:#7a7a7a"></div>
<div style="left:267px;top:337px;width:1px;height:13px;background:#7a7a7a"></div>
<div style="left:325px;top:337px;width:1px;height:13px;background:#7a7a7a"></div>
<div style="left:378px;top:337px;width:1px;height:13px;background:#7a7a7a"></div>
<div style="left:432px;top:337px;width:1px;height:13px;background:#7a7a7a"></div>
<div style="left:486px;top:337px;width:1px;height:13px;background:#7a7a7a"></div>
<div style="left:548px;top:337px;width:1px;height:13px;background:#7a7a7a"></div>
<div style="left:602px;top:337px;width:1px;height:13px;background:#7a7a7a"></div>
<div style="left:655px;top:337px;width:1px;height:13px;background:#7a7a7a"></div>
<div style="left:709px;top:337px;width:1px;height:13px;background:#7a7a7a"></div>
<div class="t" style="left:78px;top:339.5px;font-size:9px;color:#1e1e1e;letter-spacing:0.05px">User Management</div>
<div class="t frq" style="top:339.5px">Daily</div>
<div class="t xm" style="left:326px;width:53px;top:339.5px;color:#c99f2c">x</div>
<div class="t xm" style="left:379px;width:54px;top:339.5px;color:#4a4c94">x</div>
<div class="t xm" style="left:433px;width:54px;top:339.5px;color:#8e2f93">x</div>
<div class="t xm" style="left:487px;width:62px;top:339.5px;color:#f07a30">x</div>
<div class="t xm" style="left:549px;width:54px;top:339.5px;color:#82202e">x</div>
<div class="t xm" style="left:603px;width:53px;top:339.5px;color:#42a070">x</div>
<div class="t xm" style="left:656px;width:54px;top:339.5px;color:#e22b2e">x</div>
<div style="left:33px;top:361px;width:677px;height:1px;background:#7a7a7a"></div>
<div style="left:33px;top:349px;width:1px;height:13px;background:#7a7a7a"></div>
<div style="left:67px;top:349px;width:1px;height:13px;background:#7a7a7a"></div>
<div style="left:267px;top:349px;width:1px;height:13px;background:#7a7a7a"></div>
<div style="left:325px;top:349px;width:1px;height:13px;background:#7a7a7a"></div>
<div style="left:378px;top:349px;width:1px;height:13px;background:#7a7a7a"></div>
<div style="left:432px;top:349px;width:1px;height:13px;background:#7a7a7a"></div>
<div style="left:486px;top:349px;width:1px;height:13px;background:#7a7a7a"></div>
<div style="left:548px;top:349px;width:1px;height:13px;background:#7a7a7a"></div>
<div style="left:602px;top:349px;width:1px;height:13px;background:#7a7a7a"></div>
<div style="left:655px;top:349px;width:1px;height:13px;background:#7a7a7a"></div>
<div style="left:709px;top:349px;width:1px;height:13px;background:#7a7a7a"></div>
<div class="t" style="left:78px;top:351.5px;font-size:9px;color:#1e1e1e;letter-spacing:0.05px">Account Management</div>
<div class="t frq" style="top:351.5px">Daily</div>
<div class="t xm" style="left:326px;width:53px;top:351.5px;color:#c99f2c">x</div>
<div class="t xm" style="left:379px;width:54px;top:351.5px;color:#4a4c94">x</div>
<div class="t xm" style="left:433px;width:54px;top:351.5px;color:#8e2f93">x</div>
<div class="t xm" style="left:487px;width:62px;top:351.5px;color:#f07a30">x</div>
<div class="t xm" style="left:549px;width:54px;top:351.5px;color:#82202e">x</div>
<div class="t xm" style="left:603px;width:53px;top:351.5px;color:#42a070">x</div>
<div class="t xm" style="left:656px;width:54px;top:351.5px;color:#e22b2e">x</div>
<div style="left:33px;top:372px;width:677px;height:1px;background:#7a7a7a"></div>
<div style="left:33px;top:361px;width:1px;height:12px;background:#7a7a7a"></div>
<div style="left:67px;top:361px;width:1px;height:12px;background:#7a7a7a"></div>
<div style="left:267px;top:361px;width:1px;height:12px;background:#7a7a7a"></div>
<div style="left:325px;top:361px;width:1px;height:12px;background:#7a7a7a"></div>
<div style="left:378px;top:361px;width:1px;height:12px;background:#7a7a7a"></div>
<div style="left:432px;top:361px;width:1px;height:12px;background:#7a7a7a"></div>
<div style="left:486px;top:361px;width:1px;height:12px;background:#7a7a7a"></div>
<div style="left:548px;top:361px;width:1px;height:12px;background:#7a7a7a"></div>
<div style="left:602px;top:361px;width:1px;height:12px;background:#7a7a7a"></div>
<div style="left:655px;top:361px;width:1px;height:12px;background:#7a7a7a"></div>
<div style="left:709px;top:361px;width:1px;height:12px;background:#7a7a7a"></div>
<div class="t" style="left:78px;top:362.5px;font-size:9px;color:#1e1e1e;letter-spacing:0.05px">Security Group Management</div>
<div class="t frq" style="top:362.5px">Daily</div>
<div class="t xm" style="left:326px;width:53px;top:362.5px;color:#c99f2c">x</div>
<div class="t xm" style="left:379px;width:54px;top:362.5px;color:#4a4c94">x</div>
<div class="t xm" style="left:433px;width:54px;top:362.5px;color:#8e2f93">x</div>
<div class="t xm" style="left:487px;width:62px;top:362.5px;color:#f07a30">x</div>
<div class="t xm" style="left:549px;width:54px;top:362.5px;color:#82202e">x</div>
<div class="t xm" style="left:603px;width:53px;top:362.5px;color:#42a070">x</div>
<div class="t xm" style="left:656px;width:54px;top:362.5px;color:#e22b2e">x</div>
<div style="left:33px;top:384px;width:677px;height:1px;background:#7a7a7a"></div>
<div style="left:33px;top:372px;width:1px;height:13px;background:#7a7a7a"></div>
<div style="left:67px;top:372px;width:1px;height:13px;background:#7a7a7a"></div>
<div style="left:267px;top:372px;width:1px;height:13px;background:#7a7a7a"></div>
<div style="left:325px;top:372px;width:1px;height:13px;background:#7a7a7a"></div>
<div style="left:378px;top:372px;width:1px;height:13px;background:#7a7a7a"></div>
<div style="left:432px;top:372px;width:1px;height:13px;background:#7a7a7a"></div>
<div style="left:486px;top:372px;width:1px;height:13px;background:#7a7a7a"></div>
<div style="left:548px;top:372px;width:1px;height:13px;background:#7a7a7a"></div>
<div style="left:602px;top:372px;width:1px;height:13px;background:#7a7a7a"></div>
<div style="left:655px;top:372px;width:1px;height:13px;background:#7a7a7a"></div>
<div style="left:709px;top:372px;width:1px;height:13px;background:#7a7a7a"></div>
<div class="t" style="left:78px;top:374.5px;font-size:9px;color:#1e1e1e;letter-spacing:0.05px">Service and Admin Account Management</div>
<div class="t frq" style="top:374.5px">Daily</div>
<div class="t xm" style="left:326px;width:53px;top:374.5px;color:#c99f2c">x</div>
<div class="t xm" style="left:379px;width:54px;top:374.5px;color:#4a4c94">x</div>
<div class="t xm" style="left:433px;width:54px;top:374.5px;color:#8e2f93">x</div>
<div class="t xm" style="left:487px;width:62px;top:374.5px;color:#f07a30">x</div>
<div class="t xm" style="left:549px;width:54px;top:374.5px;color:#82202e">x</div>
<div class="t xm" style="left:603px;width:53px;top:374.5px;color:#42a070">x</div>
<div class="t xm" style="left:656px;width:54px;top:374.5px;color:#e22b2e">x</div>
<div style="left:33px;top:396px;width:677px;height:1px;background:#7a7a7a"></div>
<div style="left:33px;top:384px;width:1px;height:13px;background:#7a7a7a"></div>
<div style="left:67px;top:384px;width:1px;height:13px;background:#7a7a7a"></div>
<div style="left:267px;top:384px;width:1px;height:13px;background:#7a7a7a"></div>
<div style="left:325px;top:384px;width:1px;height:13px;background:#7a7a7a"></div>
<div style="left:378px;top:384px;width:1px;height:13px;background:#7a7a7a"></div>
<div style="left:432px;top:384px;width:1px;height:13px;background:#7a7a7a"></div>
<div style="left:486px;top:384px;width:1px;height:13px;background:#7a7a7a"></div>
<div style="left:548px;top:384px;width:1px;height:13px;background:#7a7a7a"></div>
<div style="left:602px;top:384px;width:1px;height:13px;background:#7a7a7a"></div>
<div style="left:655px;top:384px;width:1px;height:13px;background:#7a7a7a"></div>
<div style="left:709px;top:384px;width:1px;height:13px;background:#7a7a7a"></div>
<div class="t" style="left:78px;top:386.5px;font-size:9px;color:#1e1e1e;letter-spacing:0.05px">Shared Folder Management</div>
<div class="t frq" style="top:386.5px">Daily</div>
<div class="t xm" style="left:326px;width:53px;top:386.5px;color:#c99f2c">x</div>
<div class="t xm" style="left:379px;width:54px;top:386.5px;color:#4a4c94">x</div>
<div class="t xm" style="left:433px;width:54px;top:386.5px;color:#8e2f93">x</div>
<div class="t xm" style="left:487px;width:62px;top:386.5px;color:#f07a30">x</div>
<div class="t xm" style="left:549px;width:54px;top:386.5px;color:#82202e">x</div>
<div class="t xm" style="left:603px;width:53px;top:386.5px;color:#42a070">x</div>
<div class="t xm" style="left:656px;width:54px;top:386.5px;color:#e22b2e">x</div>
<div class="t" style="left:44.5px;top:399.0px;font-size:17px;color:#4a4a4a;transform-origin:0 0;transform:scaleX(1.0590)">Weekly activities</div>
<div style="left:33px;top:418px;width:677px;height:1px;background:#7a7a7a"></div>
<div style="left:33px;top:396px;width:1px;height:23px;background:#7a7a7a"></div>
<div style="left:709px;top:396px;width:1px;height:23px;background:#7a7a7a"></div>
<div class="t" style="left:44px;top:419.90000000000003px;font-size:9.4px;font-weight:bold;color:#1a1a1a">Verification activities</div>
<div style="left:33px;top:430px;width:677px;height:1px;background:#7a7a7a"></div>
<div style="left:33px;top:418px;width:1px;height:13px;background:#7a7a7a"></div>
<div style="left:267px;top:418px;width:1px;height:13px;background:#7a7a7a"></div>
<div style="left:325px;top:418px;width:1px;height:13px;background:#7a7a7a"></div>
<div style="left:378px;top:418px;width:1px;height:13px;background:#7a7a7a"></div>
<div style="left:432px;top:418px;width:1px;height:13px;background:#7a7a7a"></div>
<div style="left:486px;top:418px;width:1px;height:13px;background:#7a7a7a"></div>
<div style="left:548px;top:418px;width:1px;height:13px;background:#7a7a7a"></div>
<div style="left:602px;top:418px;width:1px;height:13px;background:#7a7a7a"></div>
<div style="left:655px;top:418px;width:1px;height:13px;background:#7a7a7a"></div>
<div style="left:709px;top:418px;width:1px;height:13px;background:#7a7a7a"></div>
<div style="left:33px;top:442px;width:677px;height:1px;background:#7a7a7a"></div>
<div style="left:33px;top:430px;width:1px;height:13px;background:#7a7a7a"></div>
<div style="left:67px;top:430px;width:1px;height:13px;background:#7a7a7a"></div>
<div style="left:267px;top:430px;width:1px;height:13px;background:#7a7a7a"></div>
<div style="left:325px;top:430px;width:1px;height:13px;background:#7a7a7a"></div>
<div style="left:378px;top:430px;width:1px;height:13px;background:#7a7a7a"></div>
<div style="left:432px;top:430px;width:1px;height:13px;background:#7a7a7a"></div>
<div style="left:486px;top:430px;width:1px;height:13px;background:#7a7a7a"></div>
<div style="left:548px;top:430px;width:1px;height:13px;background:#7a7a7a"></div>
<div style="left:602px;top:430px;width:1px;height:13px;background:#7a7a7a"></div>
<div style="left:655px;top:430px;width:1px;height:13px;background:#7a7a7a"></div>
<div style="left:709px;top:430px;width:1px;height:13px;background:#7a7a7a"></div>
<div class="t" style="left:78px;top:432.5px;font-size:9px;color:#1e1e1e;letter-spacing:0.05px">Shared Application State Verification</div>
<div class="t frq" style="top:432.5px">Weekly</div>
<div class="t xm" style="left:326px;width:53px;top:432.5px;color:#c99f2c">x</div>
<div class="t xm" style="left:379px;width:54px;top:432.5px;color:#4a4c94">x</div>
<div class="t xm" style="left:433px;width:54px;top:432.5px;color:#8e2f93">x</div>
<div class="t xm" style="left:487px;width:62px;top:432.5px;color:#f07a30">x</div>
<div class="t xm" style="left:549px;width:54px;top:432.5px;color:#82202e">x</div>
<div class="t xm" style="left:603px;width:53px;top:432.5px;color:#42a070">x</div>
<div class="t xm" style="left:656px;width:54px;top:432.5px;color:#e22b2e">x</div>
<div style="left:33px;top:454px;width:677px;height:1px;background:#7a7a7a"></div>
<div style="left:33px;top:442px;width:1px;height:13px;background:#7a7a7a"></div>
<div style="left:67px;top:442px;width:1px;height:13px;background:#7a7a7a"></div>
<div style="left:267px;top:442px;width:1px;height:13px;background:#7a7a7a"></div>
<div style="left:325px;top:442px;width:1px;height:13px;background:#7a7a7a"></div>
<div style="left:378px;top:442px;width:1px;height:13px;background:#7a7a7a"></div>
<div style="left:432px;top:442px;width:1px;height:13px;background:#7a7a7a"></div>
<div style="left:486px;top:442px;width:1px;height:13px;background:#7a7a7a"></div>
<div style="left:548px;top:442px;width:1px;height:13px;background:#7a7a7a"></div>
<div style="left:602px;top:442px;width:1px;height:13px;background:#7a7a7a"></div>
<div style="left:655px;top:442px;width:1px;height:13px;background:#7a7a7a"></div>
<div style="left:709px;top:442px;width:1px;height:13px;background:#7a7a7a"></div>
<div class="t" style="left:78px;top:444.5px;font-size:9px;color:#1e1e1e;letter-spacing:0.05px">COM+ Application Administration</div>
<div class="t frq" style="top:444.5px">Weekly</div>
<div class="t xm" style="left:326px;width:53px;top:444.5px;color:#c99f2c">x</div>
<div class="t xm" style="left:379px;width:54px;top:444.5px;color:#4a4c94">x</div>
<div class="t xm" style="left:433px;width:54px;top:444.5px;color:#8e2f93">x</div>
<div class="t xm" style="left:487px;width:62px;top:444.5px;color:#f07a30">x</div>
<div class="t xm" style="left:549px;width:54px;top:444.5px;color:#82202e">x</div>
<div class="t xm" style="left:603px;width:53px;top:444.5px;color:#42a070">x</div>
<div class="t xm" style="left:656px;width:54px;top:444.5px;color:#e22b2e">x</div>
<div style="left:33px;top:465px;width:677px;height:1px;background:#7a7a7a"></div>
<div style="left:33px;top:454px;width:1px;height:12px;background:#7a7a7a"></div>
<div style="left:67px;top:454px;width:1px;height:12px;background:#7a7a7a"></div>
<div style="left:267px;top:454px;width:1px;height:12px;background:#7a7a7a"></div>
<div style="left:325px;top:454px;width:1px;height:12px;background:#7a7a7a"></div>
<div style="left:378px;top:454px;width:1px;height:12px;background:#7a7a7a"></div>
<div style="left:432px;top:454px;width:1px;height:12px;background:#7a7a7a"></div>
<div style="left:486px;top:454px;width:1px;height:12px;background:#7a7a7a"></div>
<div style="left:548px;top:454px;width:1px;height:12px;background:#7a7a7a"></div>
<div style="left:602px;top:454px;width:1px;height:12px;background:#7a7a7a"></div>
<div style="left:655px;top:454px;width:1px;height:12px;background:#7a7a7a"></div>
<div style="left:709px;top:454px;width:1px;height:12px;background:#7a7a7a"></div>
<div class="t" style="left:78px;top:455.5px;font-size:9px;color:#1e1e1e;letter-spacing:0.05px">.NET Application Administration</div>
<div class="t frq" style="top:455.5px">Weekly</div>
<div class="t xm" style="left:326px;width:53px;top:455.5px;color:#c99f2c">x</div>
<div class="t xm" style="left:379px;width:54px;top:455.5px;color:#4a4c94">x</div>
<div class="t xm" style="left:433px;width:54px;top:455.5px;color:#8e2f93">x</div>
<div class="t xm" style="left:487px;width:62px;top:455.5px;color:#f07a30">x</div>
<div class="t xm" style="left:549px;width:54px;top:455.5px;color:#82202e">x</div>
<div class="t xm" style="left:603px;width:53px;top:455.5px;color:#42a070">x</div>
<div class="t xm" style="left:656px;width:54px;top:455.5px;color:#e22b2e">x</div>
<div style="left:33px;top:477px;width:677px;height:1px;background:#7a7a7a"></div>
<div style="left:33px;top:465px;width:1px;height:13px;background:#7a7a7a"></div>
<div style="left:67px;top:465px;width:1px;height:13px;background:#7a7a7a"></div>
<div style="left:267px;top:465px;width:1px;height:13px;background:#7a7a7a"></div>
<div style="left:325px;top:465px;width:1px;height:13px;background:#7a7a7a"></div>
<div style="left:378px;top:465px;width:1px;height:13px;background:#7a7a7a"></div>
<div style="left:432px;top:465px;width:1px;height:13px;background:#7a7a7a"></div>
<div style="left:486px;top:465px;width:1px;height:13px;background:#7a7a7a"></div>
<div style="left:548px;top:465px;width:1px;height:13px;background:#7a7a7a"></div>
<div style="left:602px;top:465px;width:1px;height:13px;background:#7a7a7a"></div>
<div style="left:655px;top:465px;width:1px;height:13px;background:#7a7a7a"></div>
<div style="left:709px;top:465px;width:1px;height:13px;background:#7a7a7a"></div>
<div class="t" style="left:78px;top:467.5px;font-size:9px;color:#1e1e1e;letter-spacing:0.05px">Database Server Administration</div>
<div class="t frq" style="top:467.5px">Weekly</div>
<div class="t xm" style="left:326px;width:53px;top:467.5px;color:#c99f2c">x</div>
<div class="t xm" style="left:379px;width:54px;top:467.5px;color:#4a4c94">x</div>
<div class="t xm" style="left:433px;width:54px;top:467.5px;color:#8e2f93">x</div>
<div class="t xm" style="left:487px;width:62px;top:467.5px;color:#f07a30">x</div>
<div class="t xm" style="left:549px;width:54px;top:467.5px;color:#82202e">x</div>
<div class="t xm" style="left:603px;width:53px;top:467.5px;color:#42a070">x</div>
<div class="t xm" style="left:656px;width:54px;top:467.5px;color:#e22b2e">x</div>
<div style="left:33px;top:489px;width:677px;height:1px;background:#7a7a7a"></div>
<div style="left:33px;top:477px;width:1px;height:13px;background:#7a7a7a"></div>
<div style="left:67px;top:477px;width:1px;height:13px;background:#7a7a7a"></div>
<div style="left:267px;top:477px;width:1px;height:13px;background:#7a7a7a"></div>
<div style="left:325px;top:477px;width:1px;height:13px;background:#7a7a7a"></div>
<div style="left:378px;top:477px;width:1px;height:13px;background:#7a7a7a"></div>
<div style="left:432px;top:477px;width:1px;height:13px;background:#7a7a7a"></div>
<div style="left:486px;top:477px;width:1px;height:13px;background:#7a7a7a"></div>
<div style="left:548px;top:477px;width:1px;height:13px;background:#7a7a7a"></div>
<div style="left:602px;top:477px;width:1px;height:13px;background:#7a7a7a"></div>
<div style="left:655px;top:477px;width:1px;height:13px;background:#7a7a7a"></div>
<div style="left:709px;top:477px;width:1px;height:13px;background:#7a7a7a"></div>
<div class="t" style="left:78px;top:479.5px;font-size:9px;color:#1e1e1e;letter-spacing:0.05px">Replication Topology Verification</div>
<div class="t frq" style="top:479.5px">Weekly</div>
<div class="t xm" style="left:326px;width:53px;top:479.5px;color:#c99f2c">x</div>
<div class="t xm" style="left:379px;width:54px;top:479.5px;color:#4a4c94">x</div>
<div class="t xm" style="left:433px;width:54px;top:479.5px;color:#8e2f93">x</div>
<div class="t xm" style="left:487px;width:62px;top:479.5px;color:#f07a30">x</div>
<div class="t xm" style="left:549px;width:54px;top:479.5px;color:#82202e">x</div>
<div class="t xm" style="left:603px;width:53px;top:479.5px;color:#42a070">x</div>
<div class="t xm" style="left:656px;width:54px;top:479.5px;color:#e22b2e">x</div>
<div style="left:33px;top:501px;width:677px;height:1px;background:#7a7a7a"></div>
<div style="left:33px;top:489px;width:1px;height:13px;background:#7a7a7a"></div>
<div style="left:67px;top:489px;width:1px;height:13px;background:#7a7a7a"></div>
<div style="left:267px;top:489px;width:1px;height:13px;background:#7a7a7a"></div>
<div style="left:325px;top:489px;width:1px;height:13px;background:#7a7a7a"></div>
<div style="left:378px;top:489px;width:1px;height:13px;background:#7a7a7a"></div>
<div style="left:432px;top:489px;width:1px;height:13px;background:#7a7a7a"></div>
<div style="left:486px;top:489px;width:1px;height:13px;background:#7a7a7a"></div>
<div style="left:548px;top:489px;width:1px;height:13px;background:#7a7a7a"></div>
<div style="left:602px;top:489px;width:1px;height:13px;background:#7a7a7a"></div>
<div style="left:655px;top:489px;width:1px;height:13px;background:#7a7a7a"></div>
<div style="left:709px;top:489px;width:1px;height:13px;background:#7a7a7a"></div>
<div class="t" style="left:78px;top:491.5px;font-size:9px;color:#1e1e1e;letter-spacing:0.05px">Global Catalog Status Verification</div>
<div class="t frq" style="top:491.5px">Weekly</div>
<div class="t xm" style="left:326px;width:53px;top:491.5px;color:#c99f2c">x</div>
<div class="t xm" style="left:379px;width:54px;top:491.5px;color:#4a4c94">x</div>
<div class="t xm" style="left:433px;width:54px;top:491.5px;color:#8e2f93">x</div>
<div class="t xm" style="left:487px;width:62px;top:491.5px;color:#f07a30">x</div>
<div class="t xm" style="left:549px;width:54px;top:491.5px;color:#82202e">x</div>
<div class="t xm" style="left:603px;width:53px;top:491.5px;color:#42a070">x</div>
<div class="t xm" style="left:656px;width:54px;top:491.5px;color:#e22b2e">x</div>
<div style="left:33px;top:512px;width:677px;height:1px;background:#7a7a7a"></div>
<div style="left:33px;top:501px;width:1px;height:12px;background:#7a7a7a"></div>
<div style="left:67px;top:501px;width:1px;height:12px;background:#7a7a7a"></div>
<div style="left:267px;top:501px;width:1px;height:12px;background:#7a7a7a"></div>
<div style="left:325px;top:501px;width:1px;height:12px;background:#7a7a7a"></div>
<div style="left:378px;top:501px;width:1px;height:12px;background:#7a7a7a"></div>
<div style="left:432px;top:501px;width:1px;height:12px;background:#7a7a7a"></div>
<div style="left:486px;top:501px;width:1px;height:12px;background:#7a7a7a"></div>
<div style="left:548px;top:501px;width:1px;height:12px;background:#7a7a7a"></div>
<div style="left:602px;top:501px;width:1px;height:12px;background:#7a7a7a"></div>
<div style="left:655px;top:501px;width:1px;height:12px;background:#7a7a7a"></div>
<div style="left:709px;top:501px;width:1px;height:12px;background:#7a7a7a"></div>
<div class="t" style="left:78px;top:502.5px;font-size:9px;color:#1e1e1e;letter-spacing:0.05px">Account Policy Verification</div>
<div class="t frq" style="top:502.5px">Weekly</div>
<div class="t xm" style="left:326px;width:53px;top:502.5px;color:#c99f2c">x</div>
<div class="t xm" style="left:379px;width:54px;top:502.5px;color:#4a4c94">x</div>
<div class="t xm" style="left:433px;width:54px;top:502.5px;color:#8e2f93">x</div>
<div class="t xm" style="left:487px;width:62px;top:502.5px;color:#f07a30">x</div>
<div class="t xm" style="left:549px;width:54px;top:502.5px;color:#82202e">x</div>
<div class="t xm" style="left:603px;width:53px;top:502.5px;color:#42a070">x</div>
<div class="t xm" style="left:656px;width:54px;top:502.5px;color:#e22b2e">x</div>
<div style="left:33px;top:524px;width:677px;height:1px;background:#7a7a7a"></div>
<div style="left:33px;top:512px;width:1px;height:13px;background:#7a7a7a"></div>
<div style="left:67px;top:512px;width:1px;height:13px;background:#7a7a7a"></div>
<div style="left:267px;top:512px;width:1px;height:13px;background:#7a7a7a"></div>
<div style="left:325px;top:512px;width:1px;height:13px;background:#7a7a7a"></div>
<div style="left:378px;top:512px;width:1px;height:13px;background:#7a7a7a"></div>
<div style="left:432px;top:512px;width:1px;height:13px;background:#7a7a7a"></div>
<div style="left:486px;top:512px;width:1px;height:13px;background:#7a7a7a"></div>
<div style="left:548px;top:512px;width:1px;height:13px;background:#7a7a7a"></div>
<div style="left:602px;top:512px;width:1px;height:13px;background:#7a7a7a"></div>
<div style="left:655px;top:512px;width:1px;height:13px;background:#7a7a7a"></div>
<div style="left:709px;top:512px;width:1px;height:13px;background:#7a7a7a"></div>
<div class="t" style="left:78px;top:514.5px;font-size:9px;color:#1e1e1e;letter-spacing:0.05px">Antivirus Definition Update</div>
<div class="t frq" style="top:514.5px">Weekly</div>
<div class="t xm" style="left:326px;width:53px;top:514.5px;color:#c99f2c">x</div>
<div class="t xm" style="left:379px;width:54px;top:514.5px;color:#4a4c94">x</div>
<div class="t xm" style="left:433px;width:54px;top:514.5px;color:#8e2f93">x</div>
<div class="t xm" style="left:487px;width:62px;top:514.5px;color:#f07a30">x</div>
<div class="t xm" style="left:549px;width:54px;top:514.5px;color:#82202e">x</div>
<div class="t xm" style="left:603px;width:53px;top:514.5px;color:#42a070">x</div>
<div class="t xm" style="left:656px;width:54px;top:514.5px;color:#e22b2e">x</div>
<div class="t" style="left:44.5px;top:528.0px;font-size:17px;color:#4a4a4a;transform-origin:0 0;transform:scaleX(1.0775)">Disk-related verification activities</div>
<div style="left:33px;top:547px;width:677px;height:1px;background:#7a7a7a"></div>
<div style="left:33px;top:524px;width:1px;height:24px;background:#7a7a7a"></div>
<div style="left:709px;top:524px;width:1px;height:24px;background:#7a7a7a"></div>
<div style="left:325px;top:524px;width:1px;height:24px;background:#7a7a7a"></div>
<div style="left:378px;top:524px;width:1px;height:24px;background:#7a7a7a"></div>
<div style="left:432px;top:524px;width:1px;height:24px;background:#7a7a7a"></div>
<div style="left:486px;top:524px;width:1px;height:24px;background:#7a7a7a"></div>
<div style="left:548px;top:524px;width:1px;height:24px;background:#7a7a7a"></div>
<div style="left:602px;top:524px;width:1px;height:24px;background:#7a7a7a"></div>
<div style="left:655px;top:524px;width:1px;height:24px;background:#7a7a7a"></div>
<div style="left:33px;top:559px;width:677px;height:1px;background:#7a7a7a"></div>
<div style="left:33px;top:547px;width:1px;height:13px;background:#7a7a7a"></div>
<div style="left:67px;top:547px;width:1px;height:13px;background:#7a7a7a"></div>
<div style="left:267px;top:547px;width:1px;height:13px;background:#7a7a7a"></div>
<div style="left:325px;top:547px;width:1px;height:13px;background:#7a7a7a"></div>
<div style="left:378px;top:547px;width:1px;height:13px;background:#7a7a7a"></div>
<div style="left:432px;top:547px;width:1px;height:13px;background:#7a7a7a"></div>
<div style="left:486px;top:547px;width:1px;height:13px;background:#7a7a7a"></div>
<div style="left:548px;top:547px;width:1px;height:13px;background:#7a7a7a"></div>
<div style="left:602px;top:547px;width:1px;height:13px;background:#7a7a7a"></div>
<div style="left:655px;top:547px;width:1px;height:13px;background:#7a7a7a"></div>
<div style="left:709px;top:547px;width:1px;height:13px;background:#7a7a7a"></div>
<div class="t" style="left:78px;top:549.5px;font-size:9px;color:#1e1e1e;letter-spacing:0.05px">Volume Shadow Copy Management</div>
<div class="t frq" style="top:549.5px">Weekly</div>
<div class="t xm" style="left:326px;width:53px;top:549.5px;color:#c99f2c">x</div>
<div class="t xm" style="left:379px;width:54px;top:549.5px;color:#4a4c94">x</div>
<div class="t xm" style="left:433px;width:54px;top:549.5px;color:#8e2f93">x</div>
<div class="t xm" style="left:487px;width:62px;top:549.5px;color:#f07a30">x</div>
<div class="t xm" style="left:549px;width:54px;top:549.5px;color:#82202e">x</div>
<div class="t xm" style="left:603px;width:53px;top:549.5px;color:#42a070">x</div>
<div class="t xm" style="left:656px;width:54px;top:549.5px;color:#e22b2e">x</div>
<div style="left:33px;top:570px;width:677px;height:1px;background:#7a7a7a"></div>
<div style="left:33px;top:559px;width:1px;height:12px;background:#7a7a7a"></div>
<div style="left:67px;top:559px;width:1px;height:12px;background:#7a7a7a"></div>
<div style="left:267px;top:559px;width:1px;height:12px;background:#7a7a7a"></div>
<div style="left:325px;top:559px;width:1px;height:12px;background:#7a7a7a"></div>
<div style="left:378px;top:559px;width:1px;height:12px;background:#7a7a7a"></div>
<div style="left:432px;top:559px;width:1px;height:12px;background:#7a7a7a"></div>
<div style="left:486px;top:559px;width:1px;height:12px;background:#7a7a7a"></div>
<div style="left:548px;top:559px;width:1px;height:12px;background:#7a7a7a"></div>
<div style="left:602px;top:559px;width:1px;height:12px;background:#7a7a7a"></div>
<div style="left:655px;top:559px;width:1px;height:12px;background:#7a7a7a"></div>
<div style="left:709px;top:559px;width:1px;height:12px;background:#7a7a7a"></div>
<div class="t" style="left:78px;top:560.5px;font-size:9px;color:#1e1e1e;letter-spacing:0.05px">Distributed File System Management</div>
<div class="t frq" style="top:560.5px">Weekly</div>
<div class="t xm" style="left:326px;width:53px;top:560.5px;color:#c99f2c">x</div>
<div class="t xm" style="left:379px;width:54px;top:560.5px;color:#4a4c94">x</div>
<div class="t xm" style="left:433px;width:54px;top:560.5px;color:#8e2f93">x</div>
<div class="t xm" style="left:487px;width:62px;top:560.5px;color:#f07a30">x</div>
<div class="t xm" style="left:549px;width:54px;top:560.5px;color:#82202e">x</div>
<div class="t xm" style="left:603px;width:53px;top:560.5px;color:#42a070">x</div>
<div class="t xm" style="left:656px;width:54px;top:560.5px;color:#e22b2e">x</div>
<div style="left:33px;top:582px;width:677px;height:1px;background:#7a7a7a"></div>
<div style="left:33px;top:570px;width:1px;height:13px;background:#7a7a7a"></div>
<div style="left:67px;top:570px;width:1px;height:13px;background:#7a7a7a"></div>
<div style="left:267px;top:570px;width:1px;height:13px;background:#7a7a7a"></div>
<div style="left:325px;top:570px;width:1px;height:13px;background:#7a7a7a"></div>
<div style="left:378px;top:570px;width:1px;height:13px;background:#7a7a7a"></div>
<div style="left:432px;top:570px;width:1px;height:13px;background:#7a7a7a"></div>
<div style="left:486px;top:570px;width:1px;height:13px;background:#7a7a7a"></div>
<div style="left:548px;top:570px;width:1px;height:13px;background:#7a7a7a"></div>
<div style="left:602px;top:570px;width:1px;height:13px;background:#7a7a7a"></div>
<div style="left:655px;top:570px;width:1px;height:13px;background:#7a7a7a"></div>
<div style="left:709px;top:570px;width:1px;height:13px;background:#7a7a7a"></div>
<div class="t" style="left:78px;top:572.5px;font-size:9px;color:#1e1e1e;letter-spacing:0.05px">Quota Management</div>
<div class="t frq" style="top:572.5px">Weekly</div>
<div class="t xm" style="left:326px;width:53px;top:572.5px;color:#c99f2c">x</div>
<div class="t xm" style="left:379px;width:54px;top:572.5px;color:#4a4c94">x</div>
<div class="t xm" style="left:433px;width:54px;top:572.5px;color:#8e2f93">x</div>
<div class="t xm" style="left:487px;width:62px;top:572.5px;color:#f07a30">x</div>
<div class="t xm" style="left:549px;width:54px;top:572.5px;color:#82202e">x</div>
<div class="t xm" style="left:603px;width:53px;top:572.5px;color:#42a070">x</div>
<div class="t xm" style="left:656px;width:54px;top:572.5px;color:#e22b2e">x</div>
<div style="left:33px;top:594px;width:677px;height:1px;background:#7a7a7a"></div>
<div style="left:33px;top:582px;width:1px;height:13px;background:#7a7a7a"></div>
<div style="left:67px;top:582px;width:1px;height:13px;background:#7a7a7a"></div>
<div style="left:267px;top:582px;width:1px;height:13px;background:#7a7a7a"></div>
<div style="left:325px;top:582px;width:1px;height:13px;background:#7a7a7a"></div>
<div style="left:378px;top:582px;width:1px;height:13px;background:#7a7a7a"></div>
<div style="left:432px;top:582px;width:1px;height:13px;background:#7a7a7a"></div>
<div style="left:486px;top:582px;width:1px;height:13px;background:#7a7a7a"></div>
<div style="left:548px;top:582px;width:1px;height:13px;background:#7a7a7a"></div>
<div style="left:602px;top:582px;width:1px;height:13px;background:#7a7a7a"></div>
<div style="left:655px;top:582px;width:1px;height:13px;background:#7a7a7a"></div>
<div style="left:709px;top:582px;width:1px;height:13px;background:#7a7a7a"></div>
<div class="t" style="left:78px;top:584.5px;font-size:9px;color:#1e1e1e;letter-spacing:0.05px">Indexing Service Management</div>
<div class="t frq" style="top:584.5px">Weekly</div>
<div class="t xm" style="left:326px;width:53px;top:584.5px;color:#c99f2c">x</div>
<div class="t xm" style="left:379px;width:54px;top:584.5px;color:#4a4c94">x</div>
<div class="t xm" style="left:433px;width:54px;top:584.5px;color:#8e2f93">x</div>
<div class="t xm" style="left:487px;width:62px;top:584.5px;color:#f07a30">x</div>
<div class="t xm" style="left:549px;width:54px;top:584.5px;color:#82202e">x</div>
<div class="t xm" style="left:603px;width:53px;top:584.5px;color:#42a070">x</div>
<div class="t xm" style="left:656px;width:54px;top:584.5px;color:#e22b2e">x</div>
<div style="left:33px;top:606px;width:677px;height:1px;background:#7a7a7a"></div>
<div style="left:33px;top:594px;width:1px;height:13px;background:#7a7a7a"></div>
<div style="left:67px;top:594px;width:1px;height:13px;background:#7a7a7a"></div>
<div style="left:267px;top:594px;width:1px;height:13px;background:#7a7a7a"></div>
<div style="left:325px;top:594px;width:1px;height:13px;background:#7a7a7a"></div>
<div style="left:378px;top:594px;width:1px;height:13px;background:#7a7a7a"></div>
<div style="left:432px;top:594px;width:1px;height:13px;background:#7a7a7a"></div>
<div style="left:486px;top:594px;width:1px;height:13px;background:#7a7a7a"></div>
<div style="left:548px;top:594px;width:1px;height:13px;background:#7a7a7a"></div>
<div style="left:602px;top:594px;width:1px;height:13px;background:#7a7a7a"></div>
<div style="left:655px;top:594px;width:1px;height:13px;background:#7a7a7a"></div>
<div style="left:709px;top:594px;width:1px;height:13px;background:#7a7a7a"></div>
<div class="t" style="left:78px;top:596.5px;font-size:9px;color:#1e1e1e;letter-spacing:0.05px">Data Disk Integrity Verification</div>
<div class="t frq" style="top:596.5px">Weekly</div>
<div class="t xm" style="left:326px;width:53px;top:596.5px;color:#c99f2c">x</div>
<div class="t xm" style="left:379px;width:54px;top:596.5px;color:#4a4c94">x</div>
<div class="t xm" style="left:433px;width:54px;top:596.5px;color:#8e2f93">x</div>
<div class="t xm" style="left:487px;width:62px;top:596.5px;color:#f07a30">x</div>
<div class="t xm" style="left:549px;width:54px;top:596.5px;color:#82202e">x</div>
<div class="t xm" style="left:603px;width:53px;top:596.5px;color:#42a070">x</div>
<div class="t xm" style="left:656px;width:54px;top:596.5px;color:#e22b2e">x</div>
<div style="left:33px;top:617px;width:677px;height:1px;background:#7a7a7a"></div>
<div style="left:33px;top:606px;width:1px;height:12px;background:#7a7a7a"></div>
<div style="left:67px;top:606px;width:1px;height:12px;background:#7a7a7a"></div>
<div style="left:267px;top:606px;width:1px;height:12px;background:#7a7a7a"></div>
<div style="left:325px;top:606px;width:1px;height:12px;background:#7a7a7a"></div>
<div style="left:378px;top:606px;width:1px;height:12px;background:#7a7a7a"></div>
<div style="left:432px;top:606px;width:1px;height:12px;background:#7a7a7a"></div>
<div style="left:486px;top:606px;width:1px;height:12px;background:#7a7a7a"></div>
<div style="left:548px;top:606px;width:1px;height:12px;background:#7a7a7a"></div>
<div style="left:602px;top:606px;width:1px;height:12px;background:#7a7a7a"></div>
<div style="left:655px;top:606px;width:1px;height:12px;background:#7a7a7a"></div>
<div style="left:709px;top:606px;width:1px;height:12px;background:#7a7a7a"></div>
<div class="t" style="left:78px;top:607.5px;font-size:9px;color:#1e1e1e;letter-spacing:0.05px">Data Disk Defragmentation</div>
<div class="t frq" style="top:607.5px">Weekly</div>
<div class="t xm" style="left:326px;width:53px;top:607.5px;color:#c99f2c">x</div>
<div class="t xm" style="left:379px;width:54px;top:607.5px;color:#4a4c94">x</div>
<div class="t xm" style="left:433px;width:54px;top:607.5px;color:#8e2f93">x</div>
<div class="t xm" style="left:487px;width:62px;top:607.5px;color:#f07a30">x</div>
<div class="t xm" style="left:549px;width:54px;top:607.5px;color:#82202e">x</div>
<div class="t xm" style="left:603px;width:53px;top:607.5px;color:#42a070">x</div>
<div class="t xm" style="left:656px;width:54px;top:607.5px;color:#e22b2e">x</div>
<div style="left:33px;top:629px;width:677px;height:1px;background:#7a7a7a"></div>
<div style="left:33px;top:617px;width:1px;height:13px;background:#7a7a7a"></div>
<div style="left:67px;top:617px;width:1px;height:13px;background:#7a7a7a"></div>
<div style="left:267px;top:617px;width:1px;height:13px;background:#7a7a7a"></div>
<div style="left:325px;top:617px;width:1px;height:13px;background:#7a7a7a"></div>
<div style="left:378px;top:617px;width:1px;height:13px;background:#7a7a7a"></div>
<div style="left:432px;top:617px;width:1px;height:13px;background:#7a7a7a"></div>
<div style="left:486px;top:617px;width:1px;height:13px;background:#7a7a7a"></div>
<div style="left:548px;top:617px;width:1px;height:13px;background:#7a7a7a"></div>
<div style="left:602px;top:617px;width:1px;height:13px;background:#7a7a7a"></div>
<div style="left:655px;top:617px;width:1px;height:13px;background:#7a7a7a"></div>
<div style="left:709px;top:617px;width:1px;height:13px;background:#7a7a7a"></div>
<div class="t" style="left:78px;top:619.5px;font-size:9px;color:#1e1e1e;letter-spacing:0.05px">File Access Audit Log Verification</div>
<div class="t frq" style="top:619.5px">Weekly</div>
<div class="t xm" style="left:326px;width:53px;top:619.5px;color:#c99f2c">x</div>
<div class="t xm" style="left:379px;width:54px;top:619.5px;color:#4a4c94">x</div>
<div class="t xm" style="left:433px;width:54px;top:619.5px;color:#8e2f93">x</div>
<div class="t xm" style="left:487px;width:62px;top:619.5px;color:#f07a30">x</div>
<div class="t xm" style="left:549px;width:54px;top:619.5px;color:#82202e">x</div>
<div class="t xm" style="left:603px;width:53px;top:619.5px;color:#42a070">x</div>
<div class="t xm" style="left:656px;width:54px;top:619.5px;color:#e22b2e">x</div>
<div style="left:33px;top:641px;width:677px;height:1px;background:#7a7a7a"></div>
<div style="left:33px;top:629px;width:1px;height:13px;background:#7a7a7a"></div>
<div style="left:67px;top:629px;width:1px;height:13px;background:#7a7a7a"></div>
<div style="left:267px;top:629px;width:1px;height:13px;background:#7a7a7a"></div>
<div style="left:325px;top:629px;width:1px;height:13px;background:#7a7a7a"></div>
<div style="left:378px;top:629px;width:1px;height:13px;background:#7a7a7a"></div>
<div style="left:432px;top:629px;width:1px;height:13px;background:#7a7a7a"></div>
<div style="left:486px;top:629px;width:1px;height:13px;background:#7a7a7a"></div>
<div style="left:548px;top:629px;width:1px;height:13px;background:#7a7a7a"></div>
<div style="left:602px;top:629px;width:1px;height:13px;background:#7a7a7a"></div>
<div style="left:655px;top:629px;width:1px;height:13px;background:#7a7a7a"></div>
<div style="left:709px;top:629px;width:1px;height:13px;background:#7a7a7a"></div>
<div class="t" style="left:78px;top:631.5px;font-size:9px;color:#1e1e1e;letter-spacing:0.05px">Temporary File Cleanup</div>
<div class="t frq" style="top:631.5px">Weekly</div>
<div class="t xm" style="left:326px;width:53px;top:631.5px;color:#c99f2c">x</div>
<div class="t xm" style="left:379px;width:54px;top:631.5px;color:#4a4c94">x</div>
<div class="t xm" style="left:433px;width:54px;top:631.5px;color:#8e2f93">x</div>
<div class="t xm" style="left:487px;width:62px;top:631.5px;color:#f07a30">x</div>
<div class="t xm" style="left:549px;width:54px;top:631.5px;color:#82202e">x</div>
<div class="t xm" style="left:603px;width:53px;top:631.5px;color:#42a070">x</div>
<div class="t xm" style="left:656px;width:54px;top:631.5px;color:#e22b2e">x</div>
<div style="left:33px;top:653px;width:677px;height:1px;background:#7a7a7a"></div>
<div style="left:33px;top:641px;width:1px;height:13px;background:#7a7a7a"></div>
<div style="left:67px;top:641px;width:1px;height:13px;background:#7a7a7a"></div>
<div style="left:267px;top:641px;width:1px;height:13px;background:#7a7a7a"></div>
<div style="left:325px;top:641px;width:1px;height:13px;background:#7a7a7a"></div>
<div style="left:378px;top:641px;width:1px;height:13px;background:#7a7a7a"></div>
<div style="left:432px;top:641px;width:1px;height:13px;background:#7a7a7a"></div>
<div style="left:486px;top:641px;width:1px;height:13px;background:#7a7a7a"></div>
<div style="left:548px;top:641px;width:1px;height:13px;background:#7a7a7a"></div>
<div style="left:602px;top:641px;width:1px;height:13px;background:#7a7a7a"></div>
<div style="left:655px;top:641px;width:1px;height:13px;background:#7a7a7a"></div>
<div style="left:709px;top:641px;width:1px;height:13px;background:#7a7a7a"></div>
<div class="t" style="left:78px;top:643.5px;font-size:9px;color:#1e1e1e;letter-spacing:0.05px">Security Parameter Verification</div>
<div class="t frq" style="top:643.5px">Weekly</div>
<div class="t xm" style="left:326px;width:53px;top:643.5px;color:#c99f2c">x</div>
<div class="t xm" style="left:379px;width:54px;top:643.5px;color:#4a4c94">x</div>
<div class="t xm" style="left:433px;width:54px;top:643.5px;color:#8e2f93">x</div>
<div class="t xm" style="left:487px;width:62px;top:643.5px;color:#f07a30">x</div>
<div class="t xm" style="left:549px;width:54px;top:643.5px;color:#82202e">x</div>
<div class="t xm" style="left:603px;width:53px;top:643.5px;color:#42a070">x</div>
<div class="t xm" style="left:656px;width:54px;top:643.5px;color:#e22b2e">x</div>
<div style="left:33px;top:653px;width:1px;height:4px;background:#7a7a7a"></div>
<div style="left:67px;top:653px;width:1px;height:4px;background:#7a7a7a"></div>
<div style="left:267px;top:653px;width:1px;height:4px;background:#7a7a7a"></div>
<div style="left:325px;top:653px;width:1px;height:4px;background:#7a7a7a"></div>
<div style="left:378px;top:653px;width:1px;height:4px;background:#7a7a7a"></div>
<div style="left:432px;top:653px;width:1px;height:4px;background:#7a7a7a"></div>
<div style="left:486px;top:653px;width:1px;height:4px;background:#7a7a7a"></div>
<div style="left:548px;top:653px;width:1px;height:4px;background:#7a7a7a"></div>
<div style="left:602px;top:653px;width:1px;height:4px;background:#7a7a7a"></div>
<div style="left:655px;top:653px;width:1px;height:4px;background:#7a7a7a"></div>
<div style="left:709px;top:653px;width:1px;height:4px;background:#7a7a7a"></div>
<div style="left:746px;top:55px;width:17px;height:624px;background:#fff;"></div>
<div style="left:748px;top:57px;width:12px;height:599px;background:#eeeeee;"></div>
<div style="left:748px;top:57px;width:12px;height:13px;border:1px solid #c8c8c8;background:#fff"></div>
<svg style="position:absolute;left:751px;top:62px" width="7" height="4"><path d="M0 3.5h6.5L3.25 0z" fill="#666"/></svg>
<div style="left:748px;top:69px;width:12px;height:200px;border:1px solid #c8c8c8;background:#fff"></div>
<div style="left:748px;top:644px;width:12px;height:12px;border:1px solid #c8c8c8;background:#fff"></div>
<svg style="position:absolute;left:751px;top:648px" width="7" height="4"><path d="M0 0h6.5L3.25 3.5z" fill="#666"/></svg>
<div style="left:5px;top:656px;width:759px;height:23px;background:#f1f1f1;"></div>
<div style="left:5px;top:656px;width:740px;height:1px;background:#d6d6d6;"></div>
<svg style="position:absolute;left:27px;top:663px" width="5" height="8"><path d="M4.5 0V8L0 4Z" fill="#c0c0c0"/></svg>
<svg style="position:absolute;left:51px;top:663px" width="5" height="8"><path d="M0 0V8L4.5 4Z" fill="#c0c0c0"/></svg>
<div style="left:89px;top:655px;width:82px;height:22px;background:#fff;border-left:1px solid #c6c6c6;border-right:1px solid #c6c6c6"></div>
<div style="left:89px;top:675px;width:82px;height:2px;background:#217346;"></div>
<div class="t" style="left:100px;top:662px;font-size:11px;font-weight:bold;color:#217346;transform-origin:0 0;transform:scaleX(0.97)">Activity Log</div>
<svg style="position:absolute;left:198px;top:660px" width="15" height="15" viewBox="0 0 15 15"><circle cx="7.5" cy="7.5" r="6.5" fill="none" stroke="#777" stroke-width="1.1"/><path d="M7.5 4v7M4 7.5h7" stroke="#777" stroke-width="1.4"/></svg>
<div style="left:460px;top:664px;width:1.5px;height:1.5px;background:#999;"></div>
<div style="left:460px;top:667px;width:1.5px;height:1.5px;background:#999;"></div>
<div style="left:460px;top:670px;width:1.5px;height:1.5px;background:#999;"></div>
<div style="left:474px;top:662px;width:271px;height:13px;background:#eeeeee;"></div>
<div style="left:474px;top:662px;width:13px;height:13px;border:1px solid #c8c8c8;background:#fff"></div>
<svg style="position:absolute;left:478px;top:665px" width="4" height="7"><path d="M4 0V7L0 3.5Z" fill="#666"/></svg>
<div style="left:486px;top:662px;width:224px;height:13px;border:1px solid #c8c8c8;background:#fff"></div>
<div style="left:733px;top:662px;width:12px;height:13px;border:1px solid #c8c8c8;background:#fff"></div>
<svg style="position:absolute;left:738px;top:665px" width="4" height="7"><path d="M0 0V7L4 3.5Z" fill="#666"/></svg>
<div style="left:4px;top:679px;width:760px;height:20px;background:#217346;"></div>
<div class="t" style="left:11.5px;top:683.8px;font-size:9.5px;font-weight:400;transform-origin:0 0;transform:scaleX(0.8432);color:#eef8f1">READY</div>
<svg style="position:absolute;left:55px;top:682px" width="12" height="12" viewBox="0 0 12 12"><circle cx="3" cy="3" r="2.5" fill="#dfeee5"/><rect x="1.5" y="4.5" width="10" height="7" fill="none" stroke="#dfeee5"/><path d="M4 8h2M7 8h2M4 10h2M7 10h2" stroke="#dfeee5"/></svg>
<div style="left:514px;top:679px;width:31px;height:20px;background:#1a5c38;"></div>
<svg style="position:absolute;left:524px;top:683px" width="12" height="11" viewBox="0 0 12 11"><path d="M0.5 0.5h11v10h-11z M0.5 3.8h11 M0.5 7.2h11 M4.2 0.5v10 M7.8 0.5v10" fill="none" stroke="#e0efe6" stroke-width="1"/></svg>
<svg style="position:absolute;left:555px;top:683px" width="13" height="11" viewBox="0 0 13 11"><path d="M0.5 0.5h12v10h-12z" fill="none" stroke="#dfeee5"/><path d="M3.5 2.5h6v6h-6z" fill="none" stroke="#dfeee5"/><path d="M5 4.5h3M5 6.5h3" stroke="#dfeee5"/></svg>
<svg style="position:absolute;left:587px;top:683px" width="12" height="11" viewBox="0 0 12 11"><path d="M0.5 0.5h11v10h-11z" fill="none" stroke="#dfeee5"/><rect x="2" y="1" width="3.5" height="6" fill="#dfeee5"/><rect x="6.5" y="1" width="3.5" height="6" fill="#dfeee5"/></svg>
<div style="left:613px;top:688px;width:5px;height:1.5px;background:#e8f3ec;"></div>
<div style="left:622px;top:688px;width:84px;height:1px;background:#cfe5d8;"></div>
<div style="left:655px;top:684px;width:4px;height:9px;background:#f0f8f3;"></div>
<div style="left:664px;top:685px;width:1px;height:6px;background:#cfe5d8;"></div>
<div style="left:709px;top:688px;width:7px;height:1.5px;background:#e8f3ec;"></div>
<div style="left:711.8px;top:685px;width:1.5px;height:7px;background:#e8f3ec;"></div>
<div class="t" style="left:727.5px;top:683.8px;font-size:9.5px;font-weight:400;transform-origin:0 0;transform:scaleX(1.0255);color:#eef8f1">85%</div>
<div style="left:0px;top:0px;width:768px;height:3px;background:#0b7fcc;"></div>
<div style="left:3px;top:3px;width:761px;height:1px;background:#0b3552;"></div>
<div style="left:4px;top:4px;width:759px;height:1px;background:#4d7690;"></div>
<div style="left:0px;top:0px;width:3px;height:703px;background:#0b7fcc;"></div>
<div style="left:3px;top:3px;width:1px;height:697px;background:#0b3552;"></div>
<div style="left:4px;top:4px;width:1px;height:695px;background:#4d7690;"></div>
<div style="left:765px;top:0px;width:3px;height:703px;background:#0b7fcc;"></div>
<div style="left:764px;top:3px;width:1px;height:697px;background:#0b3552;"></div>
<div style="left:763px;top:4px;width:1px;height:695px;background:#4d7690;"></div>
<div style="left:0px;top:700px;width:768px;height:3px;background:#0b7fcc;"></div>
<div style="left:3px;top:699px;width:762px;height:1px;background:#0b3552;"></div></body></html>
